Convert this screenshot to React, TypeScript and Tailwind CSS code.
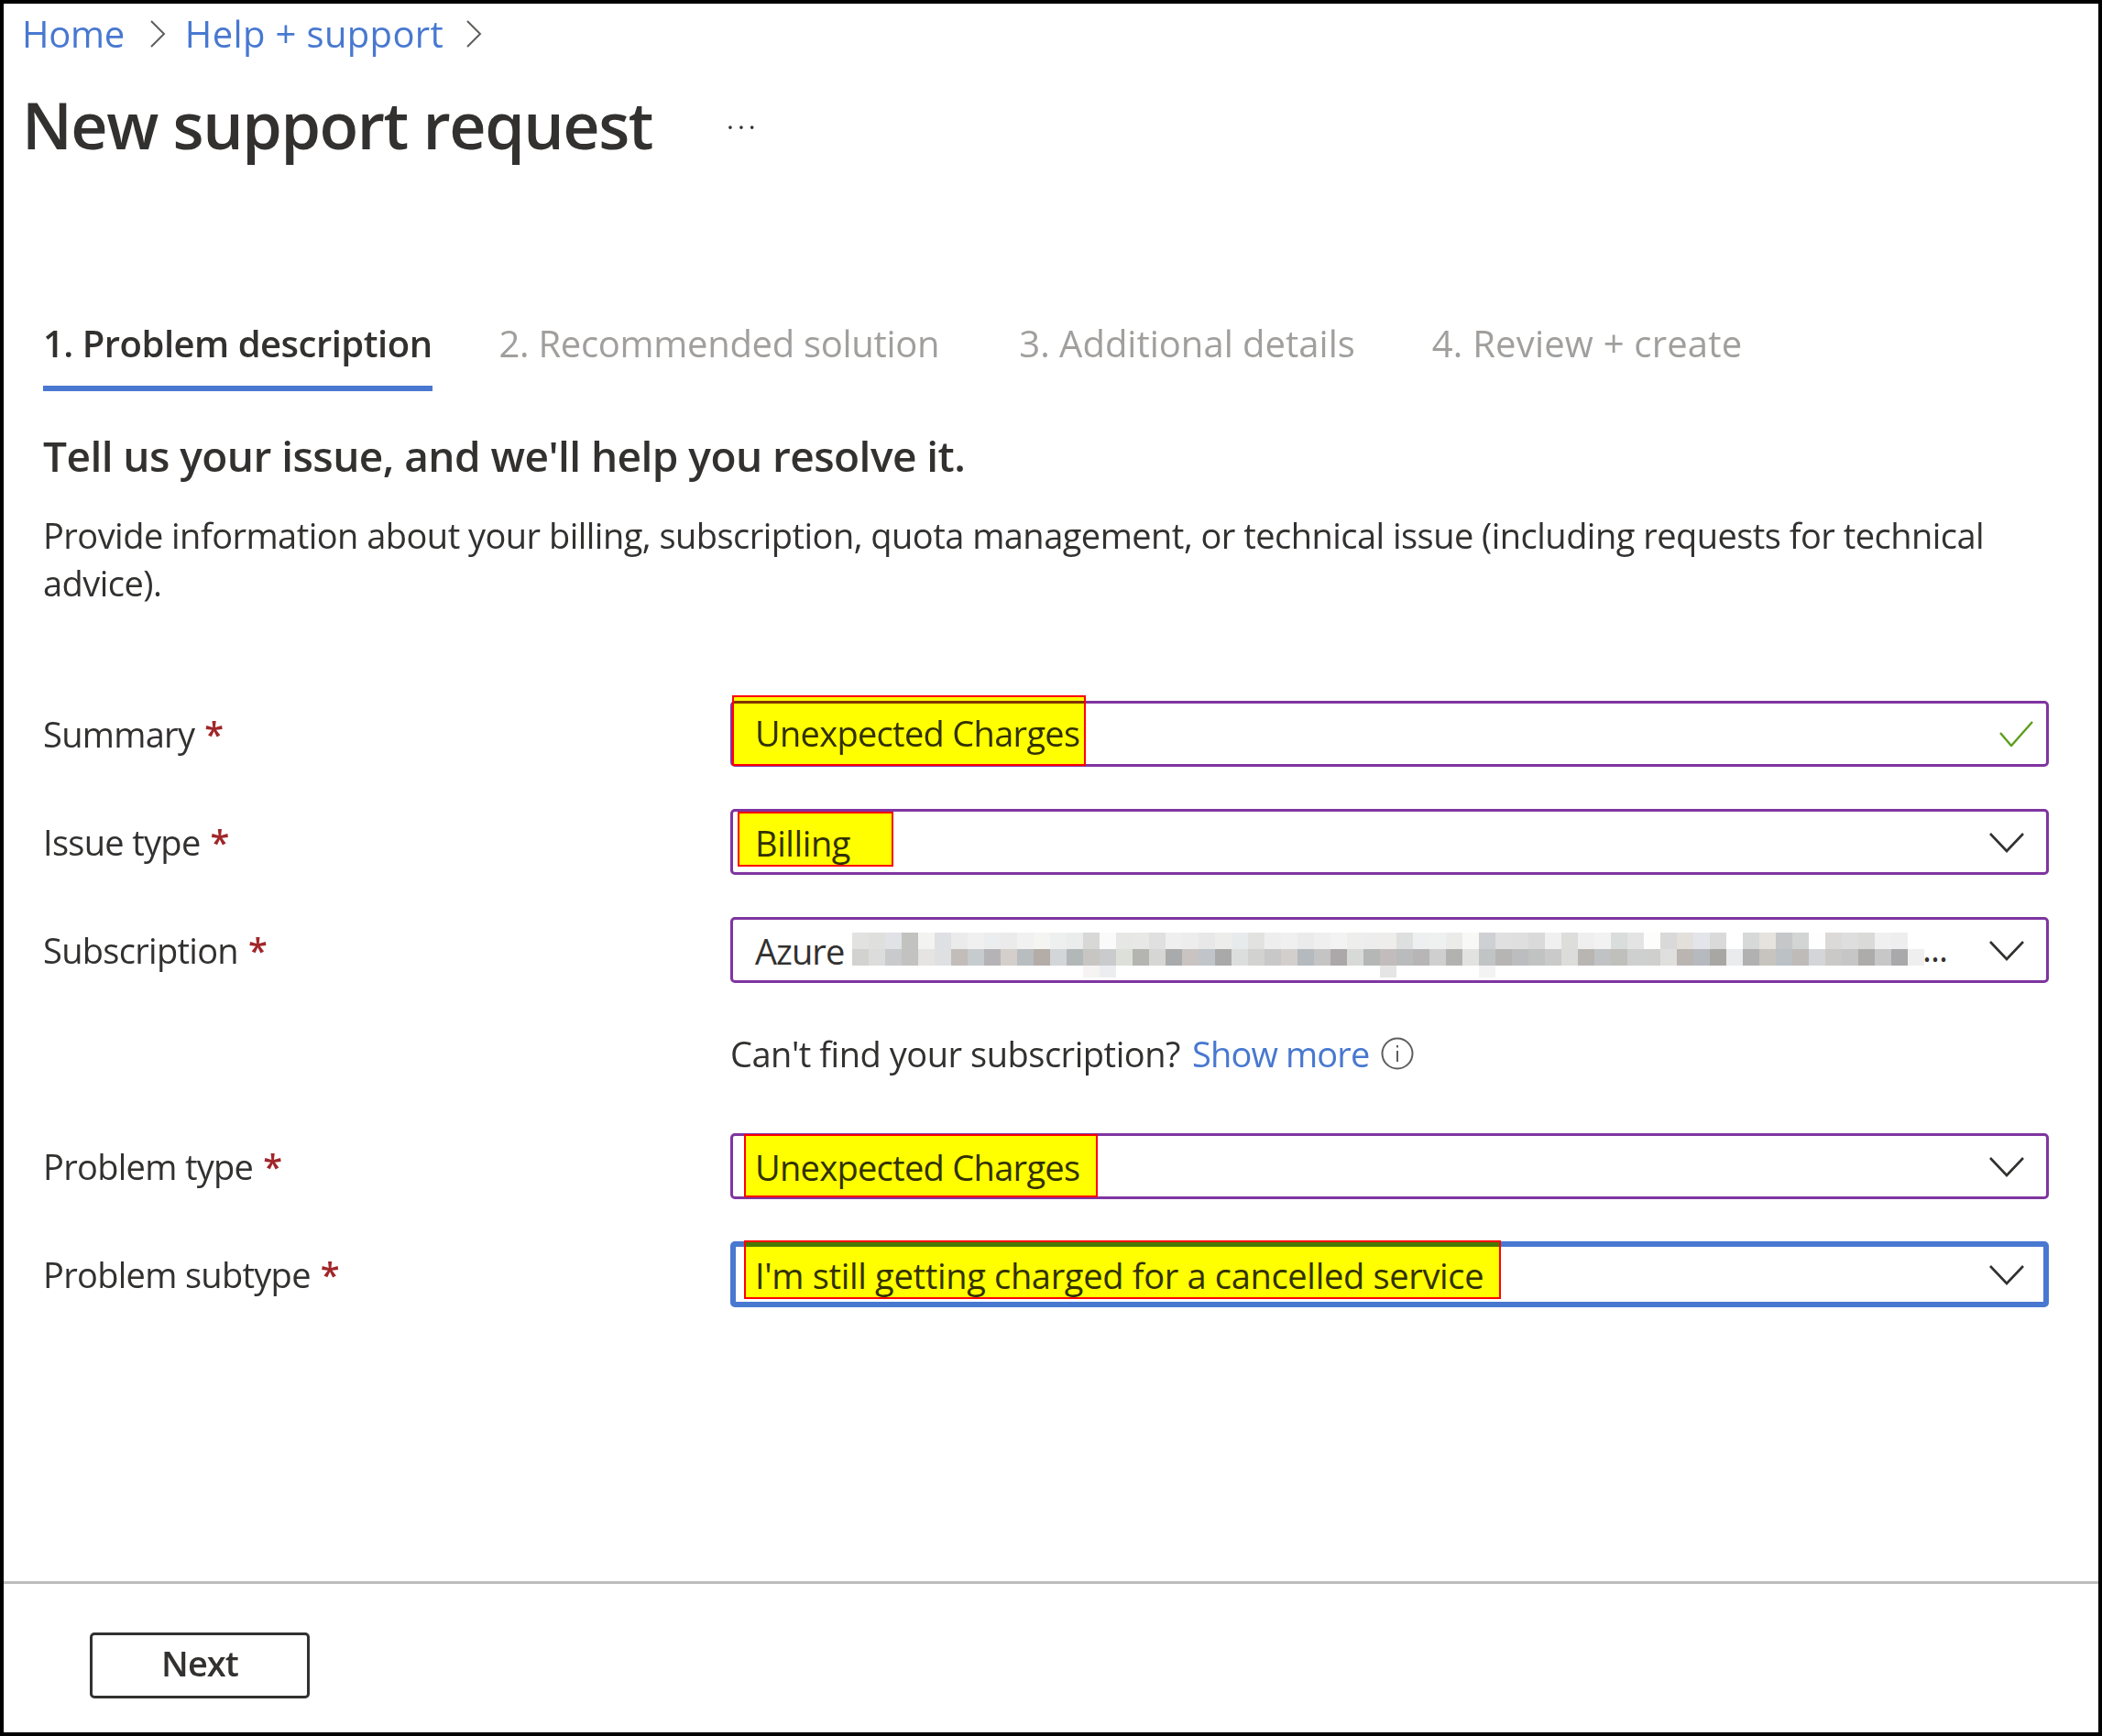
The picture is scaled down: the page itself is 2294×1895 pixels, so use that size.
import { Fragment, type ReactNode } from "react";

const topRow = "e2e2e0 dfdfde e0e2e5 c2c2c0 f3f3f1 dfe0e3 ebebeb f0f0f0 ecedef ebebec f1f1f1 f4f4f2 eeefef ebeded d8d8d6 fafafa e7e8e6 e8e8e6 e0e0e0 efefef ededed e8e8e8 ededeb e8ebeb e2e3e1 eeeeee f0f0f0 ebebeb efefef f3f3f3 eeeeec ededed eeedeb dde0df eeeff0 eff0f0 ebecea f8f8f6 ced0d3 e0e0e0 dfdfdf dadada f0f0f0 dddddb efefef f2f2f2 d9dddc e4e4e4 fdfdfb d9d9d9 e3dfdb e4e5ea dadada ffffff d6d9d8 e6e3df c5c7c9 d3d5d4 fefefe dbdad8 dedede dadad8 f0f0f0 eeeeee ffffff".split(" ");
const midRow = "d2d2d0 dcdcdc c8cacc c2c2c0 e5e4e2 dfe0e2 c2bdb9 c6cbce b6b3b7 d4cfcb b8bdc0 b3aca7 d2d6d9 b2b7b8 c8c6c3 cacbcd dddfd9 b4b5b0 d6d6d4 a9aaac c9c3c1 c0c5c9 a9a9a9 dcdedd d2d2d0 c8c8c8 d3cfcc b4babe c4c4c4 aca8a9 d8dad7 b5b7b6 c2bdbc babbbd b8b5b7 cfcfcf b2b2b0 e2e2e0 c0c4c4 b7b5b3 bcbdbf c0c3c1 cacaca dcdcda b9b5b2 c0c2c3 bfbfbb cdd0ce cfd0cd dfdfdd bab5b1 b6babf a9a7a3 e9ebed b1b1b1 c7c3be bbc1c5 bfbbb8 d3d5d8 cac9c7 c6c6c6 aeacaa c7c7c7 a9a9ab efeff0".split(" ");
const lowRow: Record<number, string> = { 14: "f5f4f2", 15: "ecedf0", 32: "e5e5e5", 38: "f3f3f3" };

// pixelated blur over the subscription name
function BlurredName() {
  return (
    <svg width="1170" height="49" viewBox="0 0 1170 49" className="absolute left-[130px] top-[14px]" shapeRendering="crispEdges">
      {topRow.map((c, i) => <rect key={i} x={i * 18} y={0} width={18} height={18} fill={`#${c}`} />)}
      {midRow.map((c, i) => <rect key={i} x={i * 18} y={18} width={18} height={18} fill={`#${c}`} />)}
      {Object.entries(lowRow).map(([i, c]) => <rect key={i} x={Number(i) * 18} y={36} width={18} height={13} fill={`#${c}`} />)}
    </svg>
  );
}

function Chevron({ focused }: { focused?: boolean }) {
  return (
    <svg
      width="40"
      height="24"
      viewBox="0 0 40 24"
      fill="none"
      className={focused ? "absolute right-[20px] top-[19px]" : "absolute right-[23px] top-[22px]"}
    >
      <path d="M2 2 L20 21 L38 2" stroke="#323130" strokeWidth="2.6" />
    </svg>
  );
}

function Crumb() {
  return (
    <svg width="18" height="30" viewBox="0 0 18 30" fill="none">
      <path d="M2 1 L16 15 L2 29" stroke="#605e5c" strokeWidth="2" />
    </svg>
  );
}

function Highlight({ className }: { className: string }) {
  return (
    <div className={`absolute border-2 border-[#ff0000] ${className}`}>
      <div className="absolute inset-0 bg-[#ffff00] mix-blend-multiply" />
    </div>
  );
}

function Field({ label, focused, children }: { label: string; focused?: boolean; children: ReactNode }) {
  return (
    <Fragment>
      <div className="flex items-center h-[72px] text-[38px] tracking-[-0.7px] leading-[52px]">
        {label}
        <span className="ml-[11px] text-[#a1262a] font-semibold">*</span>
      </div>
      <div
        className={`relative h-[72px] rounded-[5px] bg-white flex items-center pt-[3px] text-[38px] border-solid ${
          focused ? "border-[6px] border-[#4878d0] pl-[21px]" : "border-[3px] border-[#7f35a0] pl-[24px]"
        }`}
      >
        {children}
      </div>
    </Fragment>
  );
}

export default function App() {
  return (
    <div className="w-[2294px] h-[1895px] border-4 border-black bg-white text-[#323130] flex flex-col font-['Open_Sans',sans-serif] overflow-hidden">
      <div className="pl-[20px] pt-[6px] h-[60px] flex items-center text-[40px] leading-[52px] text-[#4878d0]">
        <span className="tracking-[-0.3px]">Home</span>
        <span className="ml-[27px] mr-[21px]"><Crumb /></span>
        <span className="tracking-[0.35px]">Help + support</span>
        <span className="ml-[24px]"><Crumb /></span>
      </div>

      <div className="mt-[27px] pl-[20px] flex items-center h-[90px]">
        <h1 className="text-[70px] font-semibold tracking-[-1.45px] leading-[90px]">New support request</h1>
        <span className="ml-[81px] -mt-[14px] text-[30px] tracking-[4px]">...</span>
      </div>

      <div className="mt-[168px] ml-[43px] flex text-[40px] tracking-[-0.3px] leading-[52px] text-[#a19f9d]">
        <div className="h-[78px] border-b-[6px] border-[#4878d0] font-semibold tracking-[-0.5px] text-[#323130]">1. Problem description</div>
        <div className="ml-[73px]">2. Recommended solution</div>
        <div className="ml-[87px] tracking-[0px]">3. Additional details</div>
        <div className="ml-[84px] tracking-[0.2px]">4. Review + create</div>
      </div>

      <h2 className="mt-[40px] ml-[43px] text-[46px] font-semibold tracking-[-0.55px] leading-[60px]">
        Tell us your issue, and we'll help you resolve it.
      </h2>

      <p className="mt-[31px] ml-[43px] w-[2150px] text-[38px] tracking-[-0.53px] leading-[52px]">
        Provide information about your billing, subscription, quota management, or technical issue (including requests for technical advice).
      </p>

      <div className="mt-[103px] ml-[43px] grid grid-cols-[750px_1439px] gap-y-[46px]">
        <Field label="Summary">
          <span className="-mt-[5px] tracking-[-0.7px]">Unexpected Charges</span>
          <Highlight className="left-[-1px] -top-[9px] w-[386px] h-[77px]" />
          <svg width="38" height="28" viewBox="0 0 38 28" fill="none" className="absolute right-[13px] top-[19px]">
            <path d="M1 13 L13 27 L36 1" stroke="#5c9e1c" strokeWidth="2.4" />
          </svg>
        </Field>
        <Field label="Issue type">
          <span className="tracking-[-0.4px]">Billing</span>
          <Highlight className="left-[5px] top-[0px] w-[170px] h-[60px]" />
          <Chevron />
        </Field>
        <Field label="Subscription">
          <span className="tracking-[-0.95px]">Azure</span>
          <BlurredName />
          <span className="absolute left-[1298px] top-[3px] tracking-[-0.95px]">...</span>
          <Chevron />
        </Field>

        <div />
        <div className="flex items-center h-[72px] pb-[10px] text-[38px]">
          <span className="tracking-[-0.47px]">Can't find your subscription?</span>
          <span className="ml-[13px] tracking-[-0.85px] text-[#4878d0]">Show more</span>
          <svg width="36" height="36" viewBox="0 0 36 36" fill="none" className="ml-[12px]">
            <circle cx="18" cy="18" r="16.5" stroke="#605e5c" strokeWidth="2" />
            <path d="M18 15 V27 M18 9 V11.5" stroke="#605e5c" strokeWidth="2" />
          </svg>
        </div>

        <Field label="Problem type">
          <span className="tracking-[-0.7px]">Unexpected Charges</span>
          <Highlight className="left-[12px] -top-[2px] w-[386px] h-[69px]" />
          <Chevron />
        </Field>
        <Field label="Problem subtype" focused>
          <span className="tracking-[-0.32px]">I'm still getting charged for a cancelled service</span>
          <Highlight className="left-[9px] -top-[7px] w-[826px] h-[64px]" />
          <Chevron focused />
        </Field>
      </div>

      <div className="mt-auto border-t-[3px] border-[#bdbdbd] pt-[53px] pb-[37px] pl-[94px]">
        <button type="button" className="w-[240px] h-[72px] pb-[6px] rounded-[5px] border-[3px] border-[#323130] text-[38px] font-semibold tracking-[-0.95px] flex items-center justify-center">
          Next
        </button>
      </div>
    </div>
  );
}
